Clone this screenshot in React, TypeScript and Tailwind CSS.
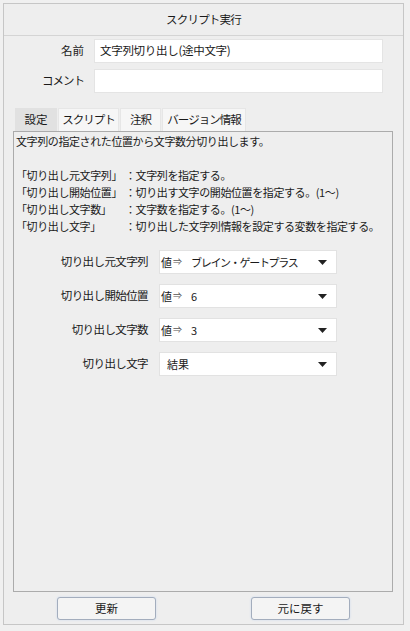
import React from 'react';

const font = { fontFamily: '"Noto Sans CJK JP", "Noto Sans", sans-serif' };

const fields = [
  { label: '切り出し元文字列', prefix: true, value: 'ブレイン・ゲートプラス' },
  { label: '切り出し開始位置', prefix: true, value: '6' },
  { label: '切り出し文字数', prefix: true, value: '3' },
  { label: '切り出し文字', prefix: false, value: '結果' },
];

const lines = [
  ['「切り出し元文字列」', '：文字列を指定する。'],
  ['「切り出し開始位置」', '：切り出す文字の開始位置を指定する。(1～)'],
  ['「切り出し文字数」', '：文字数を指定する。(1～)'],
  ['「切り出し文字」', '：切り出した文字列情報を設定する変数を指定する。'],
];

const tabs = [
  { label: '設定', w: 'w-[42px]' },
  { label: 'スクリプト', w: 'w-[61px]' },
  { label: '注釈', w: 'w-[41px]' },
  { label: 'バージョン情報', w: 'w-[84px]' },
];

const Select: React.FC<{ prefix: boolean; value: string }> = ({ prefix, value }) => (
  <div className="w-[178px] h-[24px] bg-white border border-[#e2e2e2] flex items-center">
    {prefix ? (
      <>
        <span className="pl-[1px] text-[11px]">値</span>
        <span className="text-[9px] text-[#555] ml-[1px]">⇒</span>
        <span className="ml-[9px] text-[11px] tracking-[-1.3px]">{value}</span>
      </>
    ) : (
      <span className="ml-[7px] text-[11px]">{value}</span>
    )}
    <svg width="9" height="5" viewBox="0 0 9 5" className="ml-auto mr-[9px] shrink-0">
      <path d="M0 0 H9 L4.5 5 Z" fill="#222" />
    </svg>
  </div>
);

const App: React.FC = () => {
  return (
    <div className="w-[410px] h-[631px] bg-[#f0f0f0] pt-[3px] pl-[3px] text-[#1a1a1a]" style={font}>
      <div className="w-[401px] h-[622px] border border-[#c6c6c6] bg-[#eeeeee] flex flex-col">
        <div className="h-[32px] border-b border-[#d4d4d4] flex items-center justify-center text-[11.5px] tracking-[-0.8px]">
          スクリプト実行
        </div>

        <div className="flex items-center mt-[3px]">
          <div className="w-[80px] text-right text-[11.5px]">名前</div>
          <div className="ml-[10px] w-[289px] h-[24px] bg-white border border-[#e4e4e4] flex items-center pl-[5px] text-[11.5px] tracking-[-0.3px]">
            文字列切り出し(途中文字)
          </div>
        </div>
        <div className="flex items-center mt-[6px]">
          <div className="w-[80px] text-right text-[11.5px] tracking-[-1px]">コメント</div>
          <div className="ml-[10px] w-[289px] h-[24px] bg-white border border-[#e4e4e4]" />
        </div>

        <div className="flex mt-[15px] ml-[11px] h-[23px] items-end gap-[1px]">
          {tabs.map((t, i) => (
            <div
              key={t.label}
              className={
                i === 0
                  ? `h-[23px] ${t.w} bg-[#e1e1e1] flex items-center justify-center text-[11.5px]`
                  : `h-[23px] ${t.w} bg-[#f6f6f6] border border-b-0 border-[#e6e6e6] flex items-center justify-center text-[11.5px] tracking-[-1px]`
              }
            >
              {t.label}
            </div>
          ))}
        </div>

        <div className="ml-[9px] w-[380px] h-[461px] border border-[#ababab] bg-[#eeeeee] pl-[2px] pt-[1px]">
          <div className="text-[11px] leading-[17px] tracking-[-0.4px]">
            <div>文字列の指定された位置から文字数分切り出します。</div>
            <div className="h-[17px]" />
            {lines.map(([a, b]) => (
              <div key={a} className="flex">
                <span className="w-[110px] shrink-0">{a}</span>
                <span className="-ml-[1px]">{b}</span>
              </div>
            ))}
          </div>

          <div className="mt-[15px] flex flex-col gap-[10px]">
            {fields.map((f) => (
              <div key={f.label} className="flex items-center">
                <div className="w-[132px] text-right text-[11.5px] tracking-[-0.6px]">{f.label}</div>
                <div className="ml-[11px]">
                  <Select prefix={f.prefix} value={f.value} />
                </div>
              </div>
            ))}
          </div>
        </div>

        <div className="flex mt-[5px] ml-[53px] gap-[95px]">
          <button className="w-[99px] h-[23px] rounded-[3px] border border-[#a3adbd] bg-[#f4f4f4] text-[11.5px] shadow-[0_0_2px_#c8d8ee]">
            更新
          </button>
          <button className="w-[99px] h-[23px] rounded-[3px] border border-[#a3adbd] bg-[#f4f4f4] text-[11.5px] shadow-[0_0_2px_#c8d8ee]">
            元に戻す
          </button>
        </div>
      </div>
    </div>
  );
};

export default App;
